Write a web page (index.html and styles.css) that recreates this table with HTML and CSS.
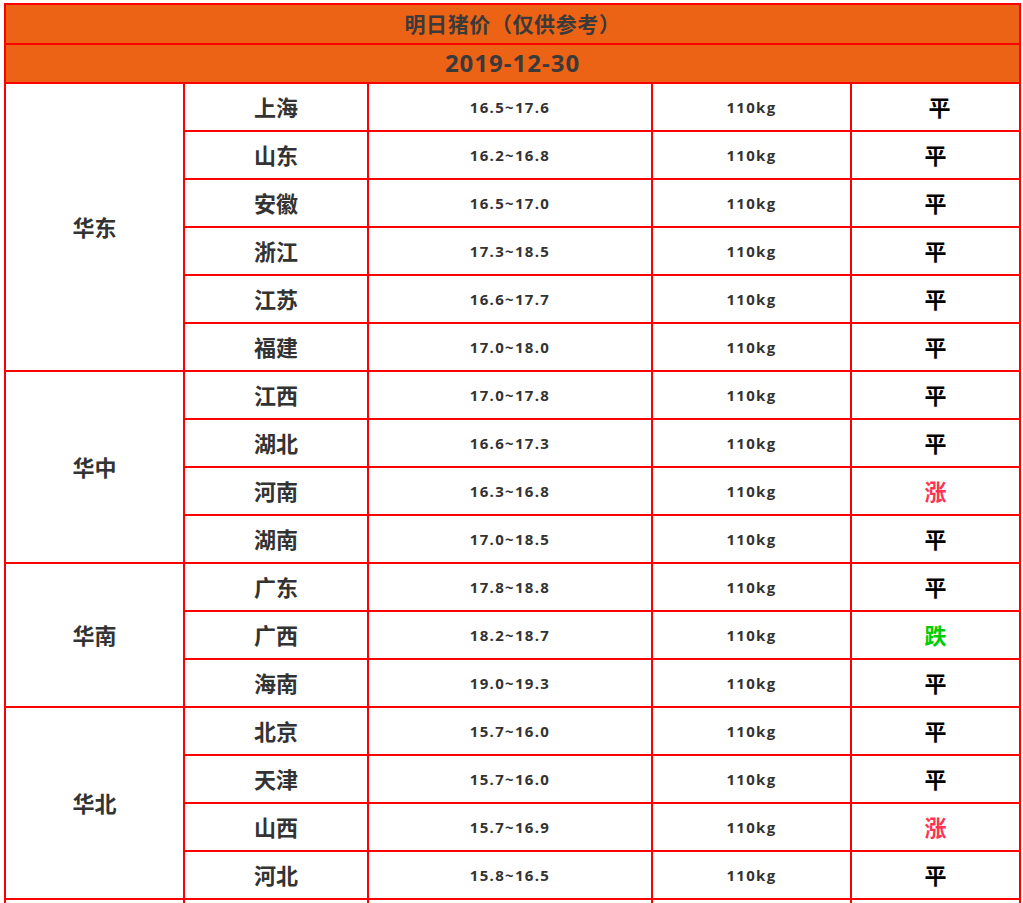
FILE: index.html
```html
<!DOCTYPE html>
<html lang="zh-CN">
<head>
<meta charset="utf-8">
<title>明日猪价</title>
<link rel="stylesheet" href="styles.css">
</head>
<body>
<div class="wrap">
<table class="price">
  <colgroup>
    <col class="c-region"><col class="c-prov"><col class="c-price"><col class="c-weight"><col class="c-trend">
  </colgroup>
  <thead>
    <tr class="head1"><th colspan="5">明日猪价（仅供参考）</th></tr>
    <tr class="head2"><th colspan="5">2019-12-30</th></tr>
  </thead>
  <tbody>
    <tr><td class="region" rowspan="6">华东</td><td class="prov">上海</td><td class="num">16.5~17.6</td><td class="num">110kg</td><td class="trend flat first">平</td></tr>
    <tr><td class="prov">山东</td><td class="num">16.2~16.8</td><td class="num">110kg</td><td class="trend flat">平</td></tr>
    <tr><td class="prov">安徽</td><td class="num">16.5~17.0</td><td class="num">110kg</td><td class="trend flat">平</td></tr>
    <tr><td class="prov">浙江</td><td class="num">17.3~18.5</td><td class="num">110kg</td><td class="trend flat">平</td></tr>
    <tr><td class="prov">江苏</td><td class="num">16.6~17.7</td><td class="num">110kg</td><td class="trend flat">平</td></tr>
    <tr><td class="prov">福建</td><td class="num">17.0~18.0</td><td class="num">110kg</td><td class="trend flat">平</td></tr>

    <tr><td class="region" rowspan="4">华中</td><td class="prov">江西</td><td class="num">17.0~17.8</td><td class="num">110kg</td><td class="trend flat">平</td></tr>
    <tr><td class="prov">湖北</td><td class="num">16.6~17.3</td><td class="num">110kg</td><td class="trend flat">平</td></tr>
    <tr><td class="prov">河南</td><td class="num">16.3~16.8</td><td class="num">110kg</td><td class="trend up">涨</td></tr>
    <tr><td class="prov">湖南</td><td class="num">17.0~18.5</td><td class="num">110kg</td><td class="trend flat">平</td></tr>

    <tr><td class="region" rowspan="3">华南</td><td class="prov">广东</td><td class="num">17.8~18.8</td><td class="num">110kg</td><td class="trend flat">平</td></tr>
    <tr><td class="prov">广西</td><td class="num">18.2~18.7</td><td class="num">110kg</td><td class="trend down">跌</td></tr>
    <tr><td class="prov">海南</td><td class="num">19.0~19.3</td><td class="num">110kg</td><td class="trend flat">平</td></tr>

    <tr><td class="region" rowspan="4">华北</td><td class="prov">北京</td><td class="num">15.7~16.0</td><td class="num">110kg</td><td class="trend flat">平</td></tr>
    <tr><td class="prov">天津</td><td class="num">15.7~16.0</td><td class="num">110kg</td><td class="trend flat">平</td></tr>
    <tr><td class="prov">山西</td><td class="num">15.7~16.9</td><td class="num">110kg</td><td class="trend up">涨</td></tr>
    <tr><td class="prov">河北</td><td class="num">15.8~16.5</td><td class="num">110kg</td><td class="trend flat">平</td></tr>

    <tr class="more"><td></td><td></td><td></td><td></td><td></td></tr>
  </tbody>
</table>
</div>
</body>
</html>
```

FILE: styles.css
```css
html, body {
  margin: 0;
  padding: 0;
  background: #ffffff;
}

.wrap {
  padding: 3px 0 0 4px;
}

.price {
  border-collapse: collapse;
  table-layout: fixed;
  width: 1015px;
  font-family: "Open Sans", "Noto Sans CJK SC", sans-serif;
  color: #333333;
  font-weight: bold;
}

.c-region { width: 179px; }
.c-prov { width: 184px; }
.c-price { width: 284px; }
.c-weight { width: 199px; }
.c-trend { width: 169px; }

.price th,
.price td {
  border: 2px solid #ff0000;
  text-align: center;
  vertical-align: middle;
  padding: 0;
}

.head1 th {
  background: #ec6316;
  height: 35px;
  padding-bottom: 3px;
  font-size: 21px;
  letter-spacing: 0.6px;
  font-family: "Noto Sans CJK SC", sans-serif;
  color: #3a3a3a;
}

.head2 th {
  background: #ec6316;
  height: 35px;
  padding-bottom: 2px;
  font-size: 24px;
  letter-spacing: 1px;
  color: #3a3a3a;
}

.price td {
  height: 46px;
}

.price td.region,
.price td.prov,
.price td.trend {
  height: 43px;
  padding-bottom: 3px;
}

.price td.num {
  height: 45px;
  padding-bottom: 1px;
}

.region,
.prov {
  font-family: "Noto Sans CJK SC", sans-serif;
  font-size: 22px;
}

.num {
  font-size: 15px;
  letter-spacing: 1.3px;
}

.trend {
  font-family: "Noto Sans CJK SC", sans-serif;
  font-size: 22px;
}

.flat { color: #000000; }
.up { color: #ff3355; }
.down { color: #00cc00; }

.price td.first {
  padding-left: 8px;
}
```
